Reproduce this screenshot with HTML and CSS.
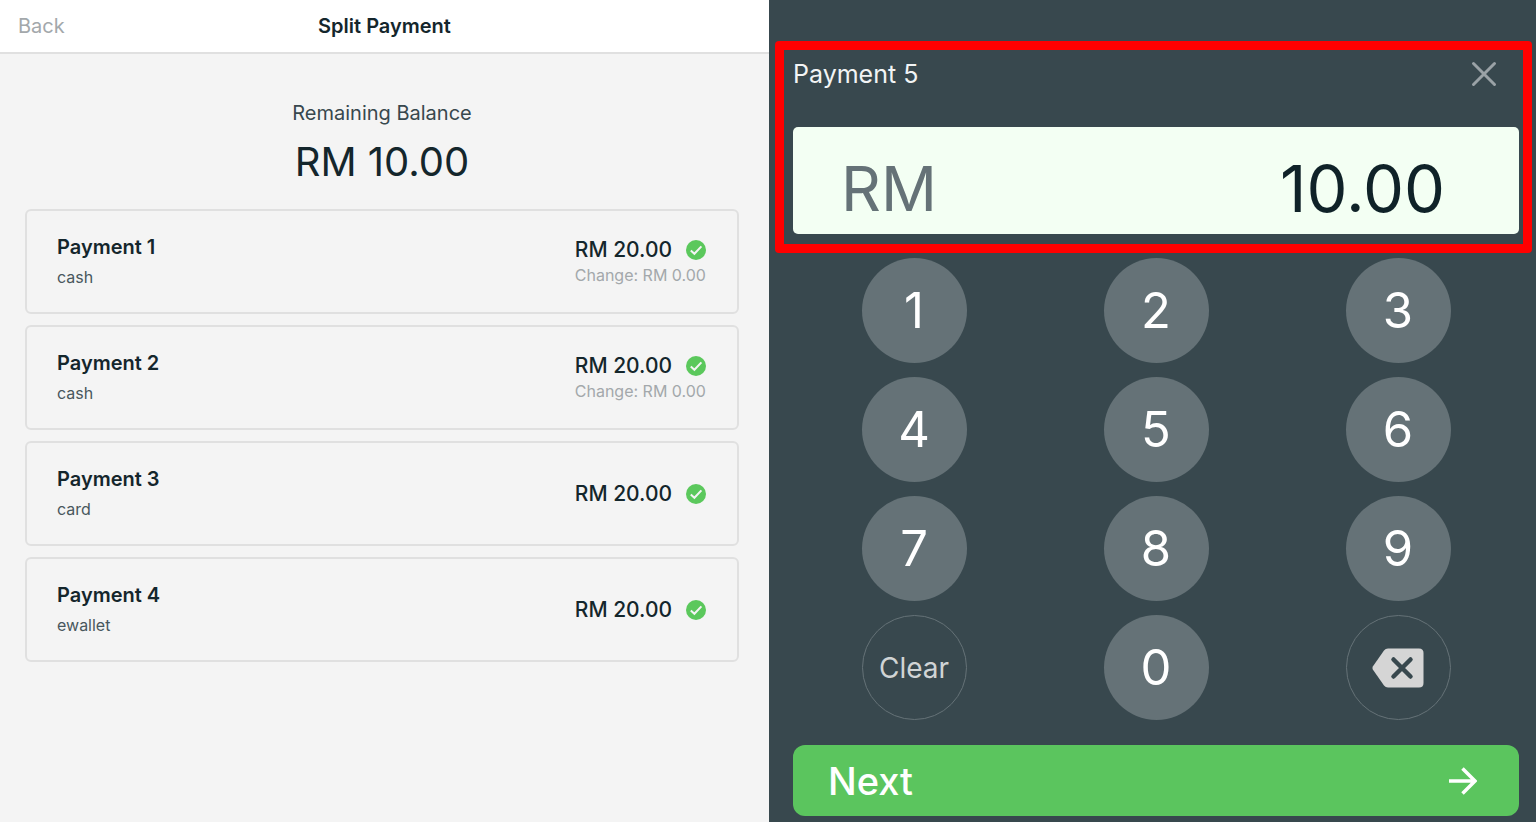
FILE: index.html
```
<!DOCTYPE html>
<html lang="en">
  <head>
    <meta charset="utf-8" />
    <meta name="viewport" content="width=device-width, initial-scale=1.0" />
    <title>Split Payment</title>
    <link rel="stylesheet" href="styles.css">
  </head>
  <body>
    <svg class="symbols" width="0" height="0" aria-hidden="true">
      <symbol id="check" viewBox="0 0 20 20">
        <circle cx="10" cy="10" r="10" fill="#5bc85c" />
        <path d="M4.8 10.4 8.4 13.8 15.4 6.4" fill="none" stroke="#f4f4f4" stroke-width="2" />
      </symbol>
    </svg>

    <main class="summary">
      <header class="topbar">
        <button type="button" class="back">Back</button>
        <h1 class="title">Split Payment</h1>
      </header>

      <div class="content">
        <div class="balance">
          <p class="balance-label">Remaining Balance</p>
          <p class="balance-value">RM 10.00</p>
        </div>

        <ul class="payments">
          <li class="payment">
            <div>
              <h2 class="name">Payment 1</h2>
              <p class="method">cash</p>
            </div>
            <div class="paid">
              <p class="amount">RM 20.00 <svg class="check"><use href="#check" /></svg></p>
              <p class="change">Change: RM 0.00</p>
            </div>
          </li>
          <li class="payment">
            <div>
              <h2 class="name">Payment 2</h2>
              <p class="method">cash</p>
            </div>
            <div class="paid">
              <p class="amount">RM 20.00 <svg class="check"><use href="#check" /></svg></p>
              <p class="change">Change: RM 0.00</p>
            </div>
          </li>
          <li class="payment">
            <div>
              <h2 class="name">Payment 3</h2>
              <p class="method">card</p>
            </div>
            <div class="paid">
              <p class="amount">RM 20.00 <svg class="check"><use href="#check" /></svg></p>
            </div>
          </li>
          <li class="payment">
            <div>
              <h2 class="name">Payment 4</h2>
              <p class="method">ewallet</p>
            </div>
            <div class="paid">
              <p class="amount">RM 20.00 <svg class="check"><use href="#check" /></svg></p>
            </div>
          </li>
        </ul>
      </div>
    </main>

    <aside class="entry">
      <section class="current">
        <div class="current-head">
          <h2 class="current-name">Payment 5</h2>
          <button type="button" class="close" aria-label="Close">
            <svg width="26" height="26" viewBox="0 0 26 26">
              <path d="M2.5 2.5 23.5 23.5M23.5 2.5 2.5 23.5" fill="none" stroke="#9aa2a6" stroke-width="3" stroke-linecap="round" />
            </svg>
          </button>
        </div>
        <div class="display">
          <label class="currency" for="amount">RM</label>
          <input class="value" id="amount" type="text" inputmode="decimal" value="10.00">
        </div>
      </section>

      <div class="keypad">
        <button type="button" class="key">1</button>
        <button type="button" class="key">2</button>
        <button type="button" class="key">3</button>
        <button type="button" class="key">4</button>
        <button type="button" class="key">5</button>
        <button type="button" class="key">6</button>
        <button type="button" class="key">7</button>
        <button type="button" class="key">8</button>
        <button type="button" class="key">9</button>
        <button type="button" class="key outline" id="clear">Clear</button>
        <button type="button" class="key">0</button>
        <button type="button" class="key outline" id="delete" aria-label="Delete">
          <svg width="52" height="40" viewBox="0 0 52 40">
            <path d="M16 .5H47Q51.500 .5 51.500 5V35Q51.500 39.500 47 39.500H16Q13.500 39.500 12 37.500L.8 21.500Q0 20 .8 18.500L12 2.500Q13.500 .5 16 .5Z" fill="#d5d5d5" />
            <path d="M21.500 11.500 38.500 28.500M38.500 11.500 21.500 28.500" fill="none" stroke="#38484e" stroke-width="4.500" stroke-linecap="round" />
          </svg>
        </button>
      </div>

      <button type="button" class="next">
        Next
        <svg width="28" height="28" viewBox="0 0 28 28">
          <path d="M0 14H25M13.500 1.500 26 14 13.500 26.500" fill="none" stroke="#fff" stroke-width="3.500" />
        </svg>
      </button>
    </aside>

    <script>
      let amount = document.getElementById("amount");
      let cents = 1000;
      let typed = false;

      function show() {
        amount.value = (cents / 100).toFixed(2);
      }

      document.querySelectorAll(".key:not(.outline)").forEach(function (key) {
        key.addEventListener("click", function () {
          // the first digit replaces the suggested amount
          if (!typed) {
            cents = 0;
            typed = true;
          }
          if (cents < 1000000) {
            cents = cents * 10 + parseInt(key.textContent, 10);
          }
          show();
        });
      });

      document.getElementById("clear").addEventListener("click", function () {
        cents = 0;
        show();
      });

      document.getElementById("delete").addEventListener("click", function () {
        cents = Math.floor(cents / 10);
        typed = true;
        show();
      });
    </script>
  </body>
</html>
```
FILE: styles.css
```
* {
    box-sizing: border-box;
    margin: 0;
    padding: 0;
}

body {
    display: grid;
    grid-template-columns: minmax(0, 769fr) minmax(0, 767fr);
    min-height: 100vh;
    font-family: Inter, "Liberation Sans", sans-serif;
    color: #14262c;
    background: #f4f4f4;
}

button {
    border: none;
    background: none;
    font-family: inherit;
    cursor: pointer;
}

.symbols {
    position: absolute;
}

.topbar {
    display: grid;
    grid-template-columns: 1fr auto 1fr;
    align-items: center;
    height: 54px;
    padding: 0 18px;
    border-bottom: 2px solid #e0e0e0;
    background: #fff;
}

.back {
    justify-self: start;
    font-size: 20px;
    color: #a3a8ab;
}

.title {
    font-size: 20px;
    font-weight: 600;
}

.content {
    padding: 44px 30px 24px 25px;
}

.balance {
    text-align: center;
}

.balance-label {
    font-size: 20px;
    line-height: 30px;
    color: #38484e;
}

.balance-value {
    margin-top: 8px;
    font-size: 40px;
    line-height: 52px;
}

.payments {
    display: grid;
    gap: 11px;
    margin-top: 21px;
    list-style: none;
}

.payment {
    display: flex;
    align-items: center;
    justify-content: space-between;
    min-height: 105px;
    padding: 1px 31px 0 30px;
    border: 2px solid #e0e0e0;
    border-radius: 6px;
}

.name {
    font-size: 20px;
    font-weight: 600;
    line-height: 30px;
}

.method {
    font-size: 16px;
    line-height: 30px;
    color: #48575d;
}

.amount {
    display: flex;
    align-items: center;
    gap: 14px;
    font-size: 21px;
    font-weight: 500;
    line-height: 26px;
}

.check {
    flex-shrink: 0;
    width: 20px;
    height: 20px;
}

.change {
    font-size: 16px;
    line-height: 24px;
    color: #a3a8ab;
}

.entry {
    padding: 41px 4px 6px 6px;
    background: #38484e;
}

.current {
    padding: 0 4px 10px 9px;
    border: 9px solid #f00;
    border-radius: 4px;
}

.current-head {
    display: flex;
    align-items: center;
    justify-content: space-between;
    height: 48px;
    margin-bottom: 29px;
    padding-right: 22px;
}

.current-name {
    font-size: 25px;
    font-weight: 400;
    color: #f2f4f5;
}

.close svg {
    display: block;
}

.display {
    display: flex;
    align-items: center;
    justify-content: space-between;
    height: 107px;
    padding: 16px 74px 0 48px;
    border-radius: 5px;
    background: #f3fff3;
}

.currency {
    font-size: 62px;
    color: #657277;
}

.value {
    flex: 1;
    width: 0;
    border: none;
    outline: none;
    background: none;
    font-family: inherit;
    font-size: 65px;
    color: #0f2228;
    text-align: right;
}

.keypad {
    display: grid;
    grid-template-columns: repeat(3, 1fr);
    gap: 14px 0;
    justify-items: center;
    padding: 5px 13px 25px 18px;
}

.key {
    display: flex;
    align-items: center;
    justify-content: center;
    width: 105px;
    height: 105px;
    border-radius: 50%;
    background: #657277;
    font-size: 49px;
    color: #fff;
}

.outline {
    border: 1px solid #657277;
    background: none;
    font-size: 28px;
    color: #d0d4d5;
}

.next {
    display: flex;
    align-items: center;
    justify-content: space-between;
    width: calc(100% - 31px);
    height: 71px;
    margin-left: 18px;
    padding: 0 42px 0 35px;
    border-radius: 12px;
    background: #5bc55e;
    font-size: 38px;
    font-weight: 500;
    color: #fff;
}
```
